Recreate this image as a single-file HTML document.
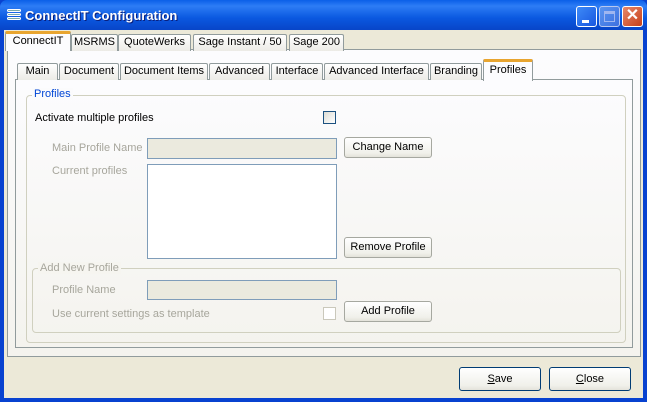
<!DOCTYPE html>
<html><head><style>
*{margin:0;padding:0;box-sizing:border-box}
body{width:647px;height:402px;overflow:hidden;font:11px "Liberation Sans",sans-serif;color:#000;position:relative;background:#0842d0}
.a{position:absolute}
.win{left:4px;top:30px;width:639px;height:368px;background:#ece9d8}
.title{left:0;top:0;width:647px;height:30px;background:linear-gradient(#0a5fe8,#2d7cf5 20%,#0a58e0 60%,#0845c8);border-radius:7px 7px 0 0}
.tab{position:absolute;height:17px;border:1px solid #919b9c;border-bottom:none;background:linear-gradient(#fff,#ecebe6);text-align:center;line-height:15px;border-radius:2px 2px 0 0}
.sel{background:#fcfcfe;border-top:3px solid #e8a530;z-index:2}
.btn{position:absolute;border:1px solid #a6a8a0;border-radius:3px;background:linear-gradient(#fff,#f0f0ea 80%,#e3e2da);text-align:center;color:#000}
.gray{color:#a7a69c}
.inp{position:absolute;border:1px solid #7f9db9}
.cb{position:absolute;width:13px;height:13px;border:1px solid #1c5180;background:linear-gradient(135deg,#dcdcd5,#fff)}
.grp{position:absolute;border:1px solid #d0d0bf;border-radius:4px}
.lg{position:absolute;background:#f7f6f1;padding:0 2px}
</style></head><body>
<div class="a title"></div>
<div class="a" style="left:7px;top:9px;width:14px;height:12px">
<div style="height:3px;border:1px solid #fff;border-radius:2px;margin-bottom:1px;background:#7aa"></div>
<div style="height:3px;border:1px solid #fff;border-radius:2px;margin-bottom:1px;background:#7aa"></div>
<div style="height:3px;border:1px solid #fff;border-radius:2px;background:#7aa"></div></div>
<div class="a" style="left:25px;top:8px;color:#fff;font-weight:bold;font-size:13px;text-shadow:1px 1px #0a1e7a">ConnectIT Configuration</div>
<div class="a" style="left:576px;top:6px;width:21px;height:21px;border:1px solid #fff;border-radius:3px;background:linear-gradient(135deg,#3d8af7,#1957e0)"><div class="a" style="left:5px;top:13px;width:7px;height:3px;background:#fff"></div></div>
<div class="a" style="left:599px;top:6px;width:21px;height:21px;border:1px solid #b8c8f0;border-radius:3px;background:linear-gradient(135deg,#5a95f0,#3d70e0)"><div class="a" style="left:4px;top:4px;width:11px;height:11px;border:1px solid #9fb6f0;border-top-width:3px"></div></div>
<div class="a" style="left:622px;top:6px;width:21px;height:21px;border:1px solid #fff;border-radius:3px;background:linear-gradient(135deg,#e8886a,#c6401a);color:#fff;font-weight:bold;font-size:16px;text-align:center;line-height:18px">✕</div>
<div class="a win"></div>
<!-- outer tab panel -->
<div class="a" style="left:7px;top:49px;width:634px;height:308px;border:1px solid #919b9c;background:linear-gradient(#fcfcfe,#f4f3ee)"></div>
<div class="tab sel" style="left:5px;top:31px;width:66px;height:20px">ConnectIT</div>
<div class="tab" style="left:71px;top:34px;width:47px">MSRMS</div>
<div class="tab" style="left:118px;top:34px;width:73px">QuoteWerks</div>
<div class="tab" style="left:193px;top:34px;width:94px">Sage Instant / 50</div>
<div class="tab" style="left:289px;top:34px;width:55px">Sage 200</div>
<!-- inner panel -->
<div class="a" style="left:15px;top:79px;width:618px;height:269px;border:1px solid #919b9c;background:linear-gradient(#fcfcfe,#f4f3ee)"></div>
<div class="tab" style="left:17px;top:63px;width:41px">Main</div>
<div class="tab" style="left:59px;top:63px;width:60px">Document</div>
<div class="tab" style="left:120px;top:63px;width:88px">Document Items</div>
<div class="tab" style="left:209px;top:63px;width:61px">Advanced</div>
<div class="tab" style="left:271px;top:63px;width:52px">Interface</div>
<div class="tab" style="left:324px;top:63px;width:105px">Advanced Interface</div>
<div class="tab" style="left:430px;top:63px;width:52px">Branding</div>
<div class="tab sel" style="left:483px;top:59px;width:50px;height:22px;line-height:16px">Profiles</div>
<!-- profiles group -->
<div class="grp" style="left:26px;top:95px;width:600px;height:248px"></div>
<div class="lg" style="left:32px;top:88px;color:#0046d5;background:#fbfbfc">Profiles</div>
<div class="a" style="left:35px;top:112px">Activate multiple profiles</div>
<div class="cb" style="left:323px;top:111px"></div>
<div class="a gray" style="left:52px;top:142px">Main Profile Name</div>
<div class="inp" style="left:147px;top:138px;width:190px;height:21px;background:#ebeade"></div>
<div class="btn" style="left:344px;top:137px;width:88px;height:21px;line-height:19px">Change Name</div>
<div class="a gray" style="left:52px;top:165px">Current profiles</div>
<div class="inp" style="left:147px;top:164px;width:190px;height:95px;background:#fff"></div>
<div class="btn" style="left:344px;top:237px;width:88px;height:21px;line-height:19px">Remove Profile</div>
<div class="grp" style="left:32px;top:268px;width:589px;height:65px"></div>
<div class="lg gray" style="left:38px;top:262px;background:#f6f5f0">Add New Profile</div>
<div class="a gray" style="left:52px;top:284px">Profile Name</div>
<div class="inp" style="left:147px;top:280px;width:190px;height:20px;background:#ebeade"></div>
<div class="a gray" style="left:52px;top:308px">Use current settings as template</div>
<div class="a" style="left:323px;top:307px;width:13px;height:13px;border:1px solid #cac8bb;background:#fff"></div>
<div class="btn gray" style="left:344px;top:301px;width:88px;height:21px;line-height:19px;color:#000">Add Profile</div>
<div class="btn" style="left:459px;top:367px;width:82px;height:24px;line-height:22px;border-color:#003c74"><u>S</u>ave</div>
<div class="btn" style="left:549px;top:367px;width:82px;height:24px;line-height:22px;border-color:#003c74"><u>C</u>lose</div>
</body></html>
